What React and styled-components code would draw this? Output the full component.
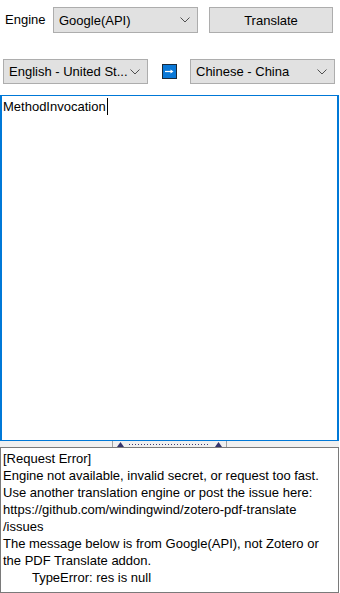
import React from "react";
import styled, { createGlobalStyle } from "styled-components";

const GlobalStyle = createGlobalStyle`
  html, body {
    margin: 0;
    padding: 0;
    background: #ffffff;
    font-family: "Liberation Sans", "Noto Sans CJK SC", sans-serif;
    font-size: 13px;
    color: #000;
  }
`;

const Page = styled.div`
  display: flex;
  flex-direction: column;
  height: 100vh;
  width: 339px;
  box-sizing: border-box;
`;

const Row = styled.div`
  display: flex;
  align-items: center;
  margin-top: ${(p) => p.$top}px;
  padding-left: ${(p) => p.$left}px;
`;

const Label = styled.span`
  width: 48px;
  line-height: 26px;
`;

const SelectBox = styled.div`
  display: flex;
  align-items: center;
  width: 145px;
  height: ${(p) => p.$h}px;
  box-sizing: border-box;
  padding: 0 7px 0 5px;
  background: #e1e1e1;
  border: 1px solid #adadad;
  white-space: nowrap;
  overflow: hidden;
  span {
    flex: none;
  }
  svg {
    flex: none;
    margin-left: auto;
  }
`;

const Button = styled.div`
  display: flex;
  align-items: center;
  justify-content: center;
  width: 124px;
  height: 26px;
  margin-left: 11px;
  box-sizing: border-box;
  background: #e1e1e1;
  border: 1px solid #adadad;
`;

const SwapButton = styled.div`
  display: flex;
  align-items: center;
  justify-content: center;
  width: 15px;
  height: 15px;
  margin: 0 13px 0 14px;
  box-sizing: border-box;
  background: #0a78d7;
  border: 1px solid #1a2a3a;
`;

const SourceArea = styled.div`
  flex: 1;
  margin-top: 11px;
  border: 1px solid #0078d7;
  border-width: 1px 2px 1px 2px;
  padding: 2px 1px;
  line-height: 17px;
  box-sizing: border-box;
`;

const Caret = styled.span`
  display: inline-block;
  width: 1px;
  height: 17px;
  margin-left: 1px;
  background: #000;
  vertical-align: -4px;
`;

const Splitter = styled.div`
  display: flex;
  justify-content: center;
  height: 6px;
  background: #f0f0f0;
`;

const Grip = styled.div`
  display: flex;
  align-items: center;
  justify-content: space-between;
  width: 115px;
  height: 6px;
  box-sizing: border-box;
  margin-left: -1px;
  padding: 0 4px;
  border-left: 1px solid #a0a0a0;
  border-right: 1px solid #a0a0a0;
`;

const Dots = styled.div`
  flex: 1;
  height: 1px;
  margin: 1px 5px 0;
  background-image: linear-gradient(to right, #3a3a70 1px, transparent 1px);
  background-size: 3px 1px;
`;

const ResultArea = styled.div`
  height: 146px;
  border: 1px solid #7a7a7a;
  padding: 2px 2px;
  line-height: 17px;
  white-space: pre-wrap;
  tab-size: 8;
  box-sizing: border-box;
  overflow: hidden;
`;

const Chevron = () => (
  <svg width="10" height="6" viewBox="0 0 10 6">
    <path d="M0.5 0.5 L5 5 L9.5 0.5" fill="none" stroke="#505050" strokeWidth="1" />
  </svg>
);

const Triangle = () => (
  <svg width="7" height="5" viewBox="0 0 7 5">
    <path d="M3.5 0 L7 5 L0 5 Z" fill="#33336b" />
  </svg>
);

const message = `[Request Error]
Engine not available, invalid secret, or request too fast.
Use another translation engine or post the issue here:
https://github.com/windingwind/zotero-pdf-translate
/issues
The message below is from Google(API), not Zotero or
the PDF Translate addon.
\tTypeError: res is null`;

export default function App() {
  return (
    <>
      <GlobalStyle />
      <Page>
        <Row $top={7} $left={5}>
          <Label>Engine</Label>
          <SelectBox $h={26}>
            <span>Google(API)</span>
            <Chevron />
          </SelectBox>
          <Button>Translate</Button>
        </Row>
        <Row $top={26} $left={3}>
          <SelectBox $h={25}>
            <span>English - United St...</span>
            <Chevron />
          </SelectBox>
          <SwapButton>
            <svg width="9" height="5" viewBox="0 0 9 5">
              <path d="M0 2.5 H7" stroke="#fff" strokeWidth="1.2" />
              <path d="M5.5 0.5 L8.5 2.5 L5.5 4.5 Z" fill="#fff" />
            </svg>
          </SwapButton>
          <SelectBox $h={25}>
            <span>Chinese - China</span>
            <Chevron />
          </SelectBox>
        </Row>
        <SourceArea>
          MethodInvocation<Caret />
        </SourceArea>
        <Splitter>
          <Grip>
            <Triangle />
            <Dots />
            <Triangle />
          </Grip>
        </Splitter>
        <ResultArea>{message}</ResultArea>
      </Page>
    </>
  );
}
